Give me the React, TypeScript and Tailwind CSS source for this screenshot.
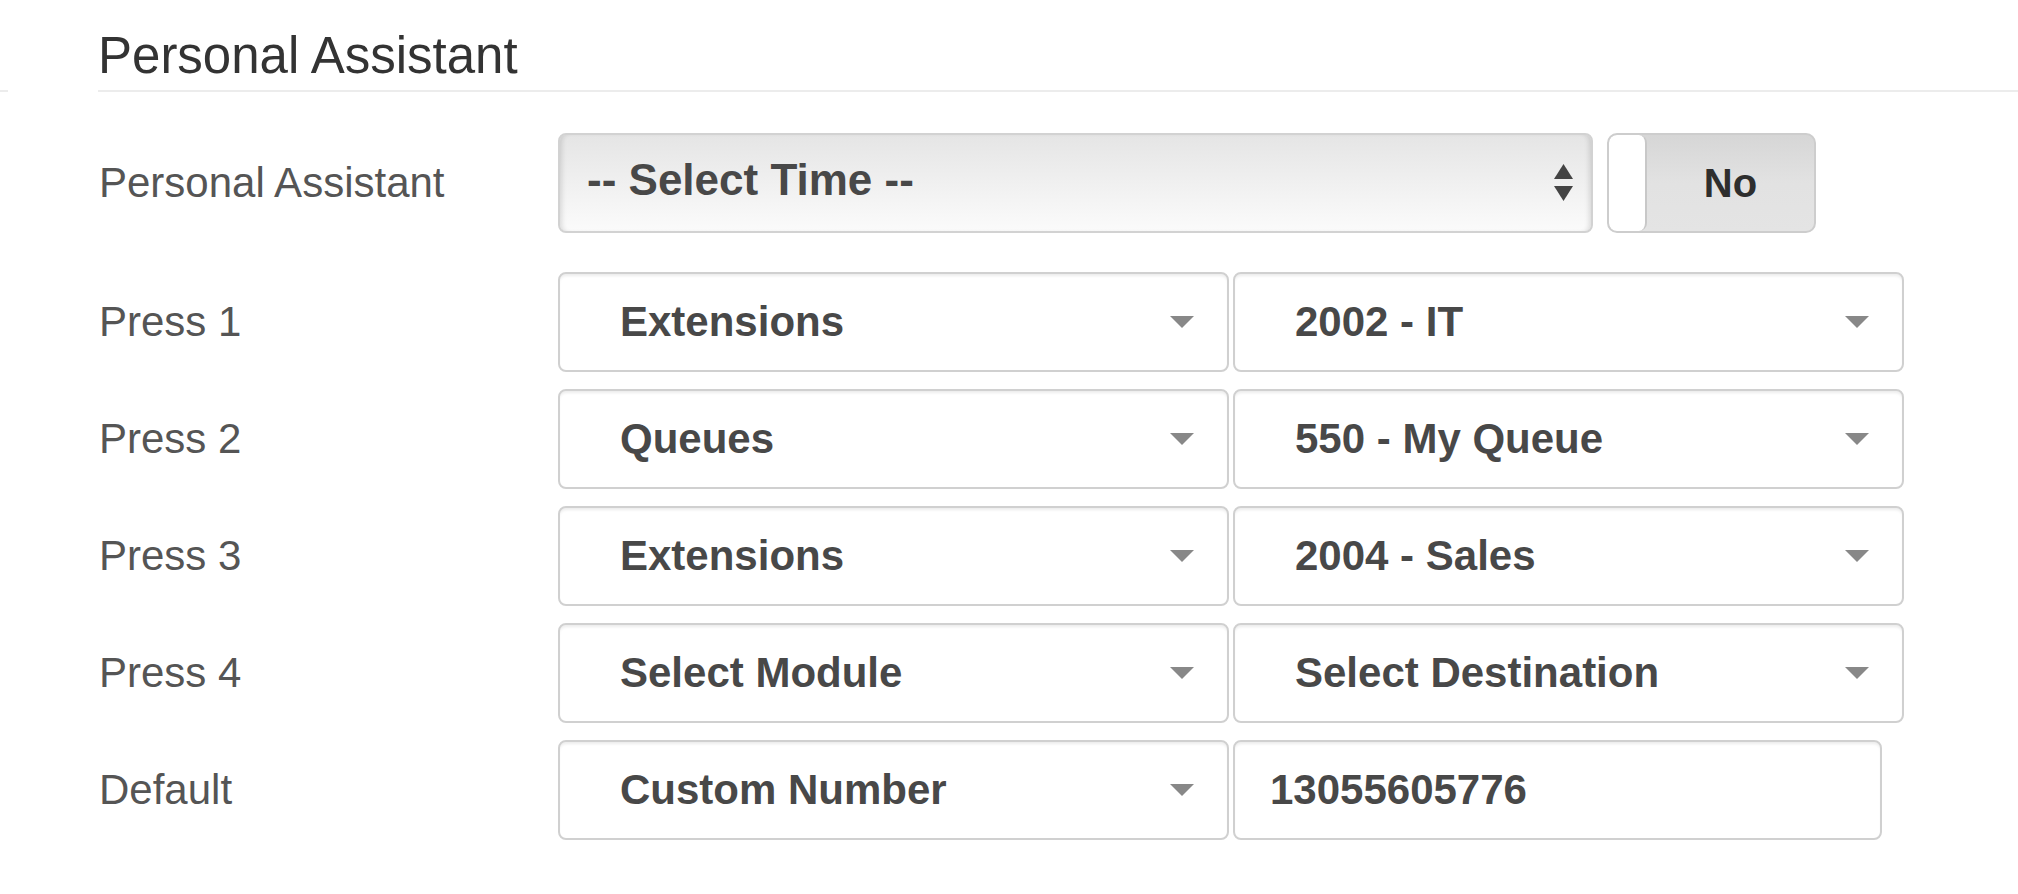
import React from "react";

const Caret = () => (
  <svg width="24" height="12" viewBox="0 0 24 12" className="shrink-0">
    <path d="M0 0 L24 0 L12 12 Z" fill="#888888" />
  </svg>
);

const UpDown = () => (
  <svg width="19" height="38" viewBox="0 0 19 38" className="shrink-0">
    <path d="M9.5 0 L19 15 L0 15 Z" fill="#444444" />
    <path d="M0 22 L19 22 L9.5 37 Z" fill="#444444" />
  </svg>
);

const SelectBox = ({ text, padLeft = "pl-[60px]" }: { text: string; padLeft?: string }) => (
  <div
    className={`flex h-[100px] w-[671px] items-center justify-between rounded-[8px] border-2 border-[#d0d0d0] bg-white pr-[33px] shadow-[inset_0_3px_3px_-1px_rgba(0,0,0,0.08)] ${padLeft}`}
  >
    <span className="text-[42px] font-bold leading-none text-[#484848]">{text}</span>
    <Caret />
  </div>
);

const rows = [
  { label: "Press 1", a: "Extensions", b: "2002 - IT" },
  { label: "Press 2", a: "Queues", b: "550 - My Queue" },
  { label: "Press 3", a: "Extensions", b: "2004 - Sales" },
  { label: "Press 4", a: "Select Module", b: "Select Destination" },
];

export default function App() {
  return (
    <div className="h-[894px] w-[2018px] overflow-hidden bg-white font-['Liberation_Sans',Arial,Helvetica,sans-serif]">
      <div className="flex items-end">
        <div className="h-[2px] w-[8px] bg-[#ececec]" />
        <div className="ml-[90px] flex-1 border-b-2 border-[#ececec] pb-[9px] pt-[30px]">
          <h1 className="text-[51px] font-normal leading-[51px] text-[#333333]">Personal Assistant</h1>
        </div>
      </div>

      <div className="mt-[41px] flex flex-col pl-[99px]">
        <div className="flex items-center">
          <div className="w-[459px] text-[42px] leading-none text-[#555555]">Personal Assistant</div>
          <div className="flex h-[100px] w-[1035px] items-center justify-between rounded-[8px] border-2 border-[#d2d2d2] bg-linear-to-b from-[#e5e5e5] to-[#fbfbfb] pb-[6px] pl-[27px] pr-[18px] shadow-[inset_5px_0_5px_-3px_rgba(0,0,0,0.12),inset_-5px_0_5px_-3px_rgba(0,0,0,0.12)]">
            <span className="text-[44px] font-bold leading-none text-[#484848]">-- Select Time --</span>
            <div className="pt-[6px]">
              <UpDown />
            </div>
          </div>
          <div className="ml-[14px] flex h-[100px] w-[209px] overflow-hidden rounded-[10px] border-2 border-[#cdcdcd] bg-linear-to-b from-[#d6d6d6] via-[#e2e2e2] to-[#e4e4e4]">
            <div className="h-full w-[38px] rounded-[8px] border-r-2 border-[#c8c8c8] bg-white" />
            <div className="flex flex-1 items-center justify-center">
              <span className="text-[40px] font-bold leading-none text-[#2e2e2e]">No</span>
            </div>
          </div>
        </div>

        <div className="mt-[39px] flex flex-col gap-[17px]">
          {rows.map((r, i) => (
            <div key={i} className="flex items-center">
              <div className="w-[459px] text-[42px] leading-none text-[#555555]">{r.label}</div>
              <div className="flex gap-[4px]">
                <SelectBox text={r.a} />
                <SelectBox text={r.b} />
              </div>
            </div>
          ))}
          <div className="flex items-center">
            <div className="w-[459px] text-[42px] leading-none text-[#555555]">Default</div>
            <div className="flex gap-[4px]">
              <SelectBox text="Custom Number" />
              <div className="flex h-[100px] w-[649px] items-center rounded-[8px] border-2 border-[#d0d0d0] bg-white pl-[35px] shadow-[inset_0_3px_3px_-1px_rgba(0,0,0,0.08)]">
                <span className="text-[42px] font-bold leading-none text-[#484848]">13055605776</span>
              </div>
            </div>
          </div>
        </div>
      </div>
    </div>
  );
}
